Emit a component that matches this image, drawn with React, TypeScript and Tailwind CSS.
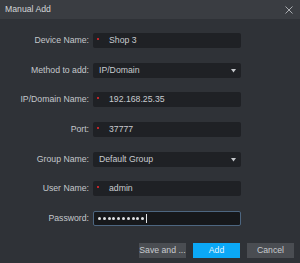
import React from "react";

const font = { fontFamily: '"Liberation Sans", Arial, sans-serif' };

function Row({ label, children }: { label: string; children: React.ReactNode }) {
  return (
    <div className="flex items-center h-[15px]">
      <div className="w-[89px] text-right text-[8.7px] text-[#c4c7cb] leading-none">{label}</div>
      <div className="ml-[4px] w-[148px] h-[15px]">{children}</div>
    </div>
  );
}

function TextInput({ value, required }: { value: string; required?: boolean }) {
  return (
    <div className="relative h-full w-full bg-[#1f2125] rounded-[2px] flex items-center">
      {required && <div className="absolute left-[4px] top-[5px] w-[2px] h-[2px] bg-[#c0262b]" />}
      <span className="ml-[16px] text-[8.7px] text-[#c8cbcf] leading-none">{value}</span>
    </div>
  );
}

function Select({ value }: { value: string }) {
  return (
    <div className="relative h-full w-full bg-[#1f2125] rounded-[2px] flex items-center">
      <span className="ml-[6px] text-[8.7px] text-[#c8cbcf] leading-none">{value}</span>
      <svg className="absolute right-[5px] top-[6px]" width="5" height="4" viewBox="0 0 5 4">
        <polygon points="0,0 5,0 2.5,3.5" fill="#c4c7cb" />
      </svg>
    </div>
  );
}

export default function App() {
  const dots = Array.from({ length: 10 });
  return (
    <div style={font} className="w-[300px] h-[263px] bg-[#2f3237] flex flex-col overflow-hidden">
      <div className="h-[19px] bg-[#3a3d42] flex items-center justify-between px-[5px]">
        <span className="text-[8.7px] text-[#d2d5d8] leading-none">Manual Add</span>
        <svg width="8" height="8" viewBox="0 0 8 8" className="mr-[2px]">
          <path d="M0.5 0.5 L7.5 7.5 M7.5 0.5 L0.5 7.5" stroke="#a9acb0" strokeWidth="1" />
        </svg>
      </div>
      <div className="flex flex-col gap-[14.67px] pt-[14px]">
        <Row label="Device Name:"><TextInput value="Shop 3" required /></Row>
        <Row label="Method to add:"><Select value="IP/Domain" /></Row>
        <Row label="IP/Domain Name:"><TextInput value="192.168.25.35" required /></Row>
        <Row label="Port:"><TextInput value="37777" required /></Row>
        <Row label="Group Name:"><Select value="Default Group" /></Row>
        <Row label="User Name:"><TextInput value="admin" required /></Row>
        <Row label="Password:">
          <div className="h-full w-full bg-[#16181b] border border-[#4d6680] rounded-[2px] flex items-center pl-[4px]">
            <div className="flex items-center gap-[1.8px]">
              {dots.map((_, i) => (
                <span key={i} className="block w-[3px] h-[3px] rounded-full bg-[#dfe2e5]" />
              ))}
            </div>
            <span className="ml-[2px] w-[1px] h-[9px] bg-[#e2e4e6]" />
          </div>
        </Row>
      </div>
      <div className="flex justify-end gap-[7px] pr-[6px] mt-[17px]">
        <button className="w-[47px] h-[15px] bg-[#4a4d52] text-[#c8cbcf] text-[8.7px] leading-none whitespace-nowrap overflow-hidden">Save and ...</button>
        <button className="w-[47px] h-[15px] bg-[#0ba8f6] text-[#e6f5ff] text-[8.7px] leading-none">Add</button>
        <button className="w-[47px] h-[15px] bg-[#4a4d52] text-[#c8cbcf] text-[8.7px] leading-none">Cancel</button>
      </div>
    </div>
  );
}
